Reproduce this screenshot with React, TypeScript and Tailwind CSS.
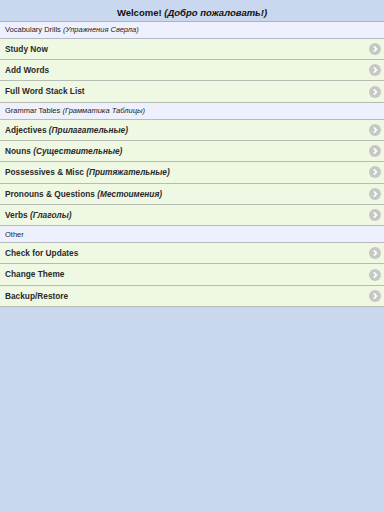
const sections = [
  {
    title: 'Vocabulary Drills',
    ru: '(Упражнения Сверла)',
    items: [{ label: 'Study Now' }, { label: 'Add Words' }, { label: 'Full Word Stack List' }],
  },
  {
    title: 'Grammar Tables',
    ru: '(Грамматика Таблицы)',
    items: [
      { label: 'Adjectives', ru: '(Прилагательные)' },
      { label: 'Nouns', ru: '(Существительные)' },
      { label: 'Possessives & Misc', ru: '(Притяжательные)' },
      { label: 'Pronouns & Questions', ru: '(Местоимения)' },
      { label: 'Verbs', ru: '(Глаголы)' },
    ],
  },
  {
    title: 'Other',
    ru: '',
    items: [{ label: 'Check for Updates' }, { label: 'Change Theme' }, { label: 'Backup/Restore' }],
  },
]

function Chevron() {
  return (
    <svg width="12" height="12" viewBox="0 0 12 12">
      <circle cx="6" cy="6" r="6" fill="#c6c8c4" />
      <path d="M4.8 3.3 L7.4 6 L4.8 8.7" fill="none" stroke="#fff" strokeWidth="1.7" />
    </svg>
  )
}

export default function App() {
  return (
    <div className="min-h-[512px] w-[384px] bg-[#c9d8ee] font-['Liberation_Sans',Arial,sans-serif]">
      <div className="flex h-[22px] items-center justify-center border-b border-[#a9b3c0] pt-[5px] text-[9.5px] font-bold text-[#111]">
        Welcome!&nbsp;<i>(Добро пожаловать!)</i>
      </div>
      {sections.map((s) => (
        <div key={s.title}>
          <div className="flex h-[16.8px] items-center border-b border-[#b6b9bf] bg-[#eef0fd] pl-[5px] text-[7.5px] text-[#222]">
            {s.title}
            {s.ru && <i>&nbsp;{s.ru}</i>}
          </div>
          {s.items.map((it) => (
            <div
              key={it.label}
              className="flex h-[21.35px] items-center justify-between border-b border-[#b7bcb2] bg-[#eff8e3] pl-[5px] pr-[3px] text-[8.3px] font-bold text-[#2a2a2a]"
            >
              <span>
                {it.label}
                {'ru' in it && it.ru && <i>&nbsp;{it.ru}</i>}
              </span>
              <Chevron />
            </div>
          ))}
        </div>
      ))}
    </div>
  )
}
